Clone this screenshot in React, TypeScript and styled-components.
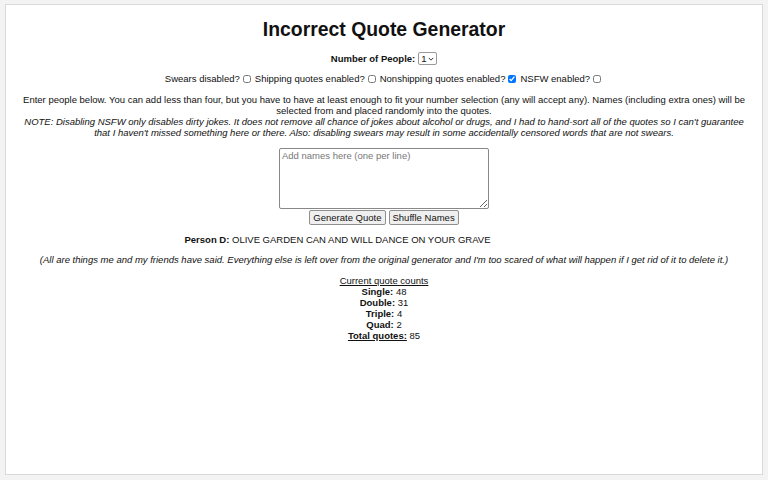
import styled, { createGlobalStyle } from 'styled-components';
import { useState } from 'react';

const GlobalStyle = createGlobalStyle`
  html, body {
    margin: 0;
    padding: 0;
    background: #f3f3f3;
  }
  body {
    font-family: "Liberation Sans", Arial, sans-serif;
    color: #111;
  }
`;

const counts = [
  { label: 'Single', value: 48 },
  { label: 'Double', value: 31 },
  { label: 'Triple', value: 4 },
  { label: 'Quad', value: 2 },
];

function App() {
  const [people, setPeople] = useState('1');
  const [options, setOptions] = useState({
    swears: false,
    shipping: false,
    nonshipping: true,
    nsfw: false,
  });

  function toggle(name: keyof typeof options) {
    setOptions({ ...options, [name]: !options[name] });
  }

  const total = counts.reduce((sum, c) => sum + c.value, 0);

  return (
    <>
      <GlobalStyle />
      <Page>
        <Card>
          <Title>Incorrect Quote Generator</Title>

          <PeopleRow>
            <b>Number of People:</b>
            <SelectWrap>
              <PeopleSelect value={people} onChange={(e) => setPeople(e.target.value)}>
                <option>1</option>
                <option>2</option>
                <option>3</option>
                <option>4</option>
              </PeopleSelect>
              <Chevron viewBox="0 0 8 5" width="6" height="4">
                <path d="M1 1l3 3 3-3" fill="none" stroke="#333" strokeWidth="1.3" />
              </Chevron>
            </SelectWrap>
          </PeopleRow>

          <OptionsRow>
            <span>Swears disabled?</span>
            <Check checked={options.swears} onChange={() => toggle('swears')} />
            <span>Shipping quotes enabled?</span>
            <Check checked={options.shipping} onChange={() => toggle('shipping')} />
            <span>Nonshipping quotes enabled?</span>
            <Check checked={options.nonshipping} onChange={() => toggle('nonshipping')} />
            <span>NSFW enabled?</span>
            <Check checked={options.nsfw} onChange={() => toggle('nsfw')} />
          </OptionsRow>

          <Info>
            Enter people below. You can add less than four, but you have to have at least
            enough to fit your number selection (any will accept any). Names (including extra
            ones) will be selected from and placed randomly into the quotes.
            <br />
            <i>
              NOTE: Disabling NSFW only disables dirty jokes. It does not remove all chance of
              jokes about alcohol or drugs, and I had to hand-sort all of the quotes so I can't
              guarantee that I haven't missed something here or there. Also: disabling swears may
              result in some accidentally censored words that are not swears.
            </i>
          </Info>

          <NamesBox placeholder="Add names here (one per line)" />
          <Buttons>
            <Button>Generate Quote</Button>
            <Button>Shuffle Names</Button>
          </Buttons>

          <QuoteLine>
            <b>Person D:</b> OLIVE GARDEN CAN AND WILL DANCE ON YOUR GRAVE
            <EmptySlot />
          </QuoteLine>

          <Disclaimer>
            (All are things me and my friends have said. Everything else is left over from the
            original generator and I'm too scared of what will happen if I get rid of it to
            delete it.)
          </Disclaimer>

          <Counts>
            <u>Current quote counts</u>
            {counts.map((c) => (
              <div key={c.label}>
                <b>{c.label}:</b> {c.value}
              </div>
            ))}
            <div>
              <b>
                <u>Total quotes:</u>
              </b>{' '}
              {total}
            </div>
          </Counts>
        </Card>
      </Page>
    </>
  );
}

const Page = styled.div`
  padding: 4px 5px 5px 5px;
  height: 480px;
  box-sizing: border-box;
`;

const Card = styled.div`
  background: #fff;
  border: 1px solid #d9d9d9;
  height: 100%;
  box-sizing: border-box;
  padding: 12px 14px;
  text-align: center;
  font-size: 9.5px;
  line-height: 11px;
`;

const Title = styled.h1`
  margin: 0 0 11px;
  font-size: 19.4px;
  line-height: 24px;
  font-weight: bold;
`;

const PeopleRow = styled.div`
  display: flex;
  justify-content: center;
  align-items: center;
  gap: 3px;
  margin-bottom: 8px;
`;

const SelectWrap = styled.span`
  position: relative;
  display: inline-flex;
`;

const PeopleSelect = styled.select`
  appearance: none;
  font-family: inherit;
  font-size: 9.5px;
  width: 19px;
  height: 13px;
  padding: 0 0 0 2px;
  border: 1px solid #999;
  border-radius: 2px;
  background: #fff;
  color: #111;
`;

const Chevron = styled.svg`
  position: absolute;
  right: 3px;
  top: 5px;
  pointer-events: none;
`;

const Check = styled.input.attrs({ type: 'checkbox' })`
  width: 8px;
  height: 8px;
  margin: 0 2px 0 1px;
`;

const OptionsRow = styled.div`
  display: flex;
  justify-content: center;
  align-items: center;
  gap: 2px;
  margin-bottom: 10px;
`;

const Info = styled.p`
  margin: 0 0 10px;
`;

const NamesBox = styled.textarea`
  display: block;
  margin: 0 auto;
  width: 210px;
  height: 61px;
  box-sizing: border-box;
  font-family: inherit;
  font-size: 9.5px;
  padding: 1px 2px;
  border: 1px solid #888;
  border-radius: 2px;
  resize: both;
  &::placeholder {
    color: #777;
  }
`;

const Buttons = styled.div`
  display: flex;
  justify-content: center;
  gap: 3px;
  margin-top: 1px;
`;

const Button = styled.button`
  font-family: inherit;
  font-size: 9.5px;
  height: 15px;
  padding: 0 3px;
  background: #efefef;
  border: 1px solid #8f8f8f;
  border-radius: 2px;
  color: #111;
`;

const QuoteLine = styled.p`
  margin: 9px 0 9px;
`;

const EmptySlot = styled.span`
  display: inline-block;
  width: 93px;
`;

const Disclaimer = styled.p`
  margin: 0 0 10px;
  font-style: italic;
`;

const Counts = styled.div`
  display: flex;
  flex-direction: column;
  align-items: center;
`;

export default App;
